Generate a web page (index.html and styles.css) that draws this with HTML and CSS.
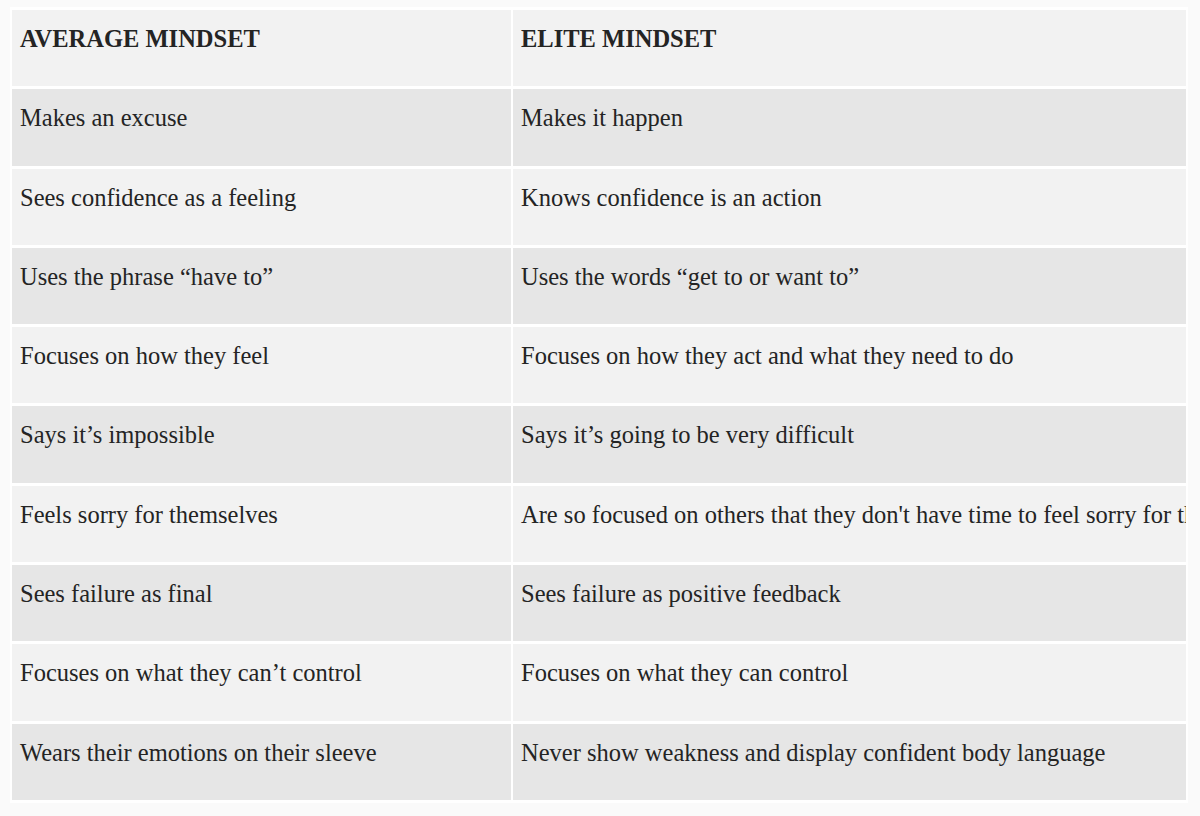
FILE: index.html
```html
<!DOCTYPE html>
<html lang="en">
<head>
<meta charset="utf-8">
<title>Average vs Elite Mindset</title>
<link rel="stylesheet" href="styles.css">
</head>
<body>
<table class="mindset">
  <colgroup><col class="col-a"><col class="col-b"></colgroup>
  <thead>
    <tr class="head"><th>AVERAGE MINDSET</th><th>ELITE MINDSET</th></tr>
  </thead>
  <tbody>
    <tr class="dark"><td>Makes an excuse</td><td>Makes it happen</td></tr>
    <tr class="light"><td>Sees confidence as a feeling</td><td>Knows confidence is an action</td></tr>
    <tr class="dark"><td>Uses the phrase “have to”</td><td>Uses the words “get to or want to”</td></tr>
    <tr class="light"><td>Focuses on how they feel</td><td>Focuses on how they act and what they need to do</td></tr>
    <tr class="dark"><td>Says it’s impossible</td><td>Says it’s going to be very difficult</td></tr>
    <tr class="light"><td>Feels sorry for themselves</td><td>Are so focused on others that they don't have time to feel sorry for themselves</td></tr>
    <tr class="dark"><td>Sees failure as final</td><td>Sees failure as positive feedback</td></tr>
    <tr class="light"><td>Focuses on what they can’t control</td><td>Focuses on what they can control</td></tr>
    <tr class="dark"><td>Wears their emotions on their sleeve</td><td>Never show weakness and display confident body language</td></tr>
  </tbody>
</table>
</body>
</html>
```
FILE: styles.css
```css
html, body {
  margin: 0;
  padding: 0;
  background: #fafafa;
}
body {
  padding: 7px 0 0 10px;
}
.mindset {
  width: 1178px;
  table-layout: fixed;
  border-collapse: separate;
  border-spacing: 2px 3px;
  background: #ffffff;
  font-family: "Liberation Serif", "Times New Roman", serif;
  font-size: 24.5px;
  line-height: 30px;
  color: #242424;
}
.col-a { width: 499px; }
.col-b { width: 673px; }
.mindset th,
.mindset td {
  height: 62.3px;
  padding: 14px 8px 0 8px;
  vertical-align: top;
  text-align: left;
  white-space: nowrap;
  overflow: hidden;
}
.mindset th {
  font-weight: bold;
}
.head th { background: #f2f2f2; }
.light td { background: #f2f2f2; }
.dark td { background: #e6e6e6; }
```
